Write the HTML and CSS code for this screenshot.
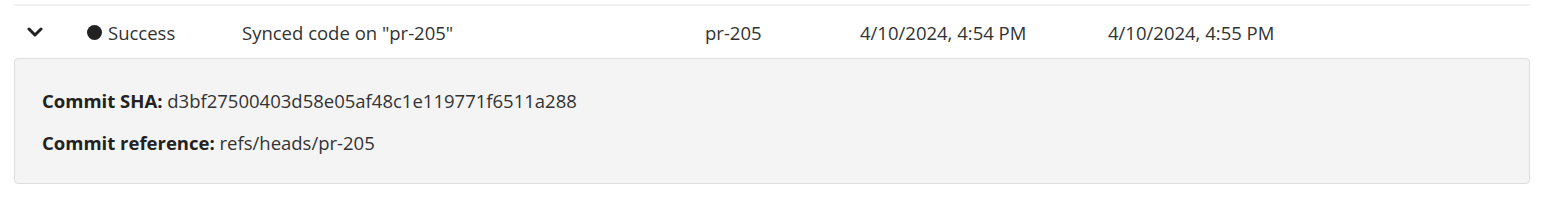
FILE: index.html
```html
<!DOCTYPE html>
<html lang="en">
<head>
    <meta charset="UTF-8">
    <meta name="viewport" content="width=device-width, initial-scale=1.0">
    <title>Sync history</title>
    <link rel="stylesheet" href="styles.css">
</head>
<body>
    <div class="history">
        <div class="history__row">
            <div class="history__cell history__toggle">
                <svg width="16" height="10" viewBox="0 0 16 10" aria-hidden="true">
                    <path d="M2 2 L8 8 L14 2" fill="none" stroke="#222" stroke-width="3" stroke-linecap="round" stroke-linejoin="round"/>
                </svg>
            </div>
            <div class="history__cell history__status">
                <span class="status-dot"></span>Success
            </div>
            <div class="history__cell">Synced code on "pr-205"</div>
            <div class="history__cell">pr-205</div>
            <div class="history__cell">4/10/2024, 4:54 PM</div>
            <div class="history__cell">4/10/2024, 4:55 PM</div>
        </div>
        <div class="history__details">
            <p><strong>Commit SHA:</strong> d3bf27500403d58e05af48c1e119771f6511a288</p>
            <p><strong>Commit reference:</strong> refs/heads/pr-205</p>
        </div>
    </div>
</body>
</html>
```

FILE: styles.css
```css
body {
    margin: 0;
    background-color: #fff;
    font-family: "Open Sans", "Liberation Sans", sans-serif;
    color: #333;
}

.history {
    width: 1516px;
    margin-left: 14px;
    padding-top: 4px;
}

.history__row {
    display: grid;
    grid-template-columns: 59px 155px 463px 155px 248px 1fr;
    align-items: center;
    height: 52px;
    border-top: 2px solid #f0f0f0;
    font-size: 18.5px;
}

.history__cell {
    padding: 0 14px;
    white-space: nowrap;
}

.history__toggle {
    padding-left: 13px;
    display: flex;
    align-items: center;
}

.history__status {
    display: flex;
    align-items: center;
}

.status-dot {
    display: inline-block;
    width: 15px;
    height: 15px;
    border-radius: 50%;
    background-color: #222;
    margin-right: 6px;
}

.history__details {
    background-color: #f4f4f4;
    border: 1px solid #ddd;
    border-radius: 4px;
    padding: 29px 27px 28px;
    font-size: 18.5px;
    line-height: 25px;
}

.history__details p {
    margin: 0;
}

.history__details p + p {
    margin-top: 17px;
}

.history__details strong {
    color: #222;
}
```
